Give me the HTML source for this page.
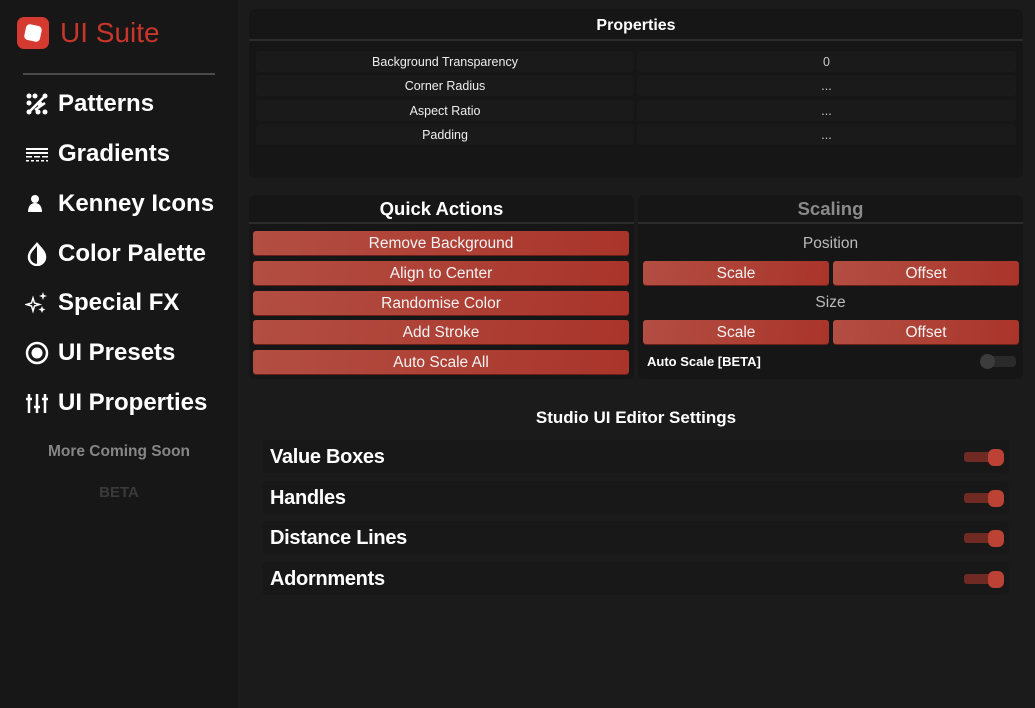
<!DOCTYPE html>
<html><head><meta charset="utf-8"><style>
*{margin:0;padding:0;box-sizing:border-box}
body{width:1035px;height:708px;background:#1b1b1b;font-family:"Liberation Sans",sans-serif;color:#fff;position:relative;overflow:hidden}
.a{position:absolute}
#side{left:0;top:0;width:238px;height:708px;background:#171717}
.nav{left:25px;font-weight:bold;font-size:24px;height:30px;line-height:30px;display:flex;align-items:center}
.nav svg{width:24px;height:24px;margin-right:9px}
.panel{background:#161616;border-radius:6px}
.row{background:#1a1a1a;border-radius:3px;font-size:12.5px;text-align:center;line-height:23px;height:21px;color:#eee}
.btn{background:linear-gradient(100deg,#b34e43,#a9342a);border-radius:3px;text-align:center;color:#f2f2f2;font-size:15.5px;height:24px;line-height:26px;box-shadow:0 1px 0 #6b1f19}
.set{left:262px;width:747px;height:33px;background:#181818;border-radius:4px}
.set span{position:absolute;left:8px;top:1px;line-height:33px;font-weight:bold;font-size:20px;letter-spacing:-0.3px}
.tg{position:absolute;right:5px;top:9px;width:40px;height:16px}
.tg i{position:absolute;left:0;top:3px;width:34px;height:10px;background:#6e2a23;border-radius:3px}
.tg b{position:absolute;right:0;top:0;width:16px;height:17px;background:#bb4234;border-radius:6px}
</style></head><body>
<div id="side" class="a"></div>
<div class="a" style="left:17px;top:17px;width:32px;height:32px;background:#d53a30;border-radius:7px"><div style="position:absolute;left:8px;top:8px;width:16px;height:16px;background:#fff;border-radius:4px;transform:rotate(12deg)"></div></div>
<div class="a" style="left:60px;top:15px;font-size:28px;color:#c8352b;line-height:36px">UI Suite</div>
<div class="a" style="left:23px;top:73px;width:192px;height:2px;background:#4a4a4a"></div>

<div class="a nav" style="top:89px"><svg viewBox="0 0 24 24" fill="#fff"><circle cx="4" cy="4" r="2.5"/><circle cx="10" cy="4" r="2.5"/><circle cx="20" cy="4" r="2.5"/><circle cx="4" cy="11" r="2.5"/><circle cx="4" cy="20" r="2.5"/><circle cx="13" cy="20" r="2.5"/><circle cx="20" cy="20" r="2.5"/><circle cx="15" cy="12" r="2.5"/><path d="M4 20L20 4M10 18l10-7" stroke="#fff" stroke-width="2.5"/></svg>Patterns</div>
<div class="a nav" style="top:139px"><svg viewBox="0 0 24 24" fill="#fff"><rect x="1" y="6" width="22" height="2"/><rect x="1" y="10" width="22" height="2"/><rect x="1" y="14" width="6" height="1.5"/><rect x="9" y="14" width="6" height="1.5"/><rect x="17" y="14" width="6" height="1.5"/><rect x="1" y="18" width="3" height="1.5"/><rect x="6" y="18" width="3" height="1.5"/><rect x="11" y="18" width="3" height="1.5"/><rect x="16" y="18" width="3" height="1.5"/><rect x="21" y="18" width="2" height="1.5"/></svg>Gradients</div>
<div class="a nav" style="top:189px"><svg viewBox="0 0 24 24" fill="#fff"><circle cx="10" cy="7" r="4"/><path d="M3 20c0-6 3-9 7-9s7 3 7 9z"/></svg>Kenney Icons</div>
<div class="a nav" style="top:239px"><svg viewBox="0 0 24 24"><path d="M12 2C8 7 4 10 4 15a8 8 0 0016 0c0-5-4-8-8-13z" fill="none" stroke="#fff" stroke-width="2.5"/><path d="M12 2c4 5 8 8 8 13a8 8 0 01-8 8z" fill="#fff"/></svg>Color Palette</div>
<div class="a nav" style="top:288px"><svg viewBox="0 0 24 24"><path d="M8 7l1.5 5 5 1.5-5 1.5L8 20l-1.5-5-5-1.5 5-1.5z" fill="none" stroke="#fff" stroke-width="1.5"/><path d="M18 1l1 3 3 1-3 1-1 3-1-3-3-1 3-1zM17 15l1 2.5 2.5 1-2.5 1L17 22l-1-2.5-2.5-1 2.5-1z" fill="#fff"/></svg>Special FX</div>
<div class="a nav" style="top:338px"><svg viewBox="0 0 24 24"><circle cx="12" cy="12" r="10" fill="none" stroke="#fff" stroke-width="2.5"/><circle cx="12" cy="12" r="5.5" fill="#fff"/></svg>UI Presets</div>
<div class="a nav" style="top:388px"><svg viewBox="0 0 24 24" stroke="#fff" stroke-width="2.5" fill="none"><path d="M4 3v19M12 3v19M20 3v19M1 8h6M9 16h6M17 8h6"/></svg>UI Properties</div>
<div class="a" style="left:0;width:238px;top:443px;text-align:center;font-weight:bold;font-size:15.5px;color:#868686">More Coming Soon</div>
<div class="a" style="left:0;width:238px;top:484px;text-align:center;font-weight:bold;font-size:15px;color:#3a3a3a">BETA</div>

<div class="a panel" style="left:249px;top:9px;width:774px;height:169px"></div>
<div class="a" style="left:249px;width:774px;top:17px;text-align:center;font-weight:bold;font-size:16px">Properties</div>
<div class="a" style="left:249px;width:774px;top:39px;height:2px;background:#2c2c2c"></div>
<div class="a row" style="left:256px;top:51px;width:378px">Background Transparency</div>
<div class="a row" style="left:637px;top:51px;width:379px;color:#ccc">0</div>
<div class="a row" style="left:256px;top:75px;width:378px">Corner Radius</div>
<div class="a row" style="left:637px;top:75px;width:379px;color:#ccc">...</div>
<div class="a row" style="left:256px;top:100px;width:378px">Aspect Ratio</div>
<div class="a row" style="left:637px;top:100px;width:379px;color:#ccc">...</div>
<div class="a row" style="left:256px;top:124px;width:378px">Padding</div>
<div class="a row" style="left:637px;top:124px;width:379px;color:#ccc">...</div>

<div class="a panel" style="left:249px;top:195px;width:385px;height:184px"></div>
<div class="a" style="left:249px;width:385px;top:198px;text-align:center;font-weight:bold;font-size:18.5px">Quick Actions</div>
<div class="a" style="left:249px;width:385px;top:222px;height:2px;background:#2c2c2c"></div>
<div class="a btn" style="left:253px;top:231px;width:376px">Remove Background</div>
<div class="a btn" style="left:253px;top:261px;width:376px">Align to Center</div>
<div class="a btn" style="left:253px;top:291px;width:376px">Randomise Color</div>
<div class="a btn" style="left:253px;top:320px;width:376px">Add Stroke</div>
<div class="a btn" style="left:253px;top:350px;width:376px">Auto Scale All</div>

<div class="a panel" style="left:638px;top:195px;width:385px;height:184px"></div>
<div class="a" style="left:638px;width:385px;top:198px;text-align:center;font-weight:bold;font-size:18.5px;color:#8a8a8a">Scaling</div>
<div class="a" style="left:638px;width:385px;top:222px;height:2px;background:#2c2c2c"></div>
<div class="a" style="left:638px;width:385px;top:235px;text-align:center;font-size:15.5px;color:#bbb">Position</div>
<div class="a btn" style="left:643px;top:261px;width:186px">Scale</div>
<div class="a btn" style="left:833px;top:261px;width:186px">Offset</div>
<div class="a" style="left:638px;width:385px;top:294px;text-align:center;font-size:15.5px;color:#bbb">Size</div>
<div class="a btn" style="left:643px;top:320px;width:186px">Scale</div>
<div class="a btn" style="left:833px;top:320px;width:186px">Offset</div>
<div class="a" style="left:647px;top:354px;font-weight:bold;font-size:13px">Auto Scale [BETA]</div>
<div class="a" style="left:985px;top:356px;width:31px;height:11px;background:#2a2a2a;border-radius:4px"></div>
<div class="a" style="left:980px;top:354px;width:15px;height:15px;background:#3c3c3c;border-radius:50%"></div>

<div class="a" style="left:249px;width:774px;top:408px;text-align:center;font-weight:bold;font-size:17px">Studio UI Editor Settings</div>
<div class="a set" style="top:440px"><span>Value Boxes</span><div class="tg"><i></i><b></b></div></div>
<div class="a set" style="top:481px"><span>Handles</span><div class="tg"><i></i><b></b></div></div>
<div class="a set" style="top:521px"><span>Distance Lines</span><div class="tg"><i></i><b></b></div></div>
<div class="a set" style="top:562px"><span>Adornments</span><div class="tg"><i></i><b></b></div></div>
</body></html>
